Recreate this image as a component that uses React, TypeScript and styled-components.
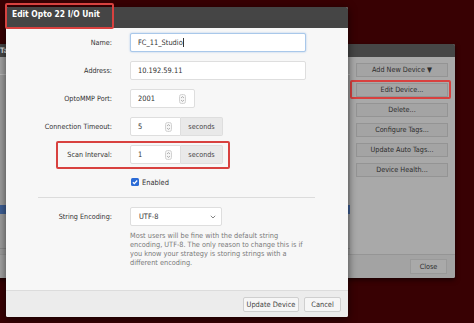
import React from "react";
import styled, { createGlobalStyle, css } from "styled-components";

const font = `"DejaVu Sans Condensed", "DejaVu Sans", sans-serif`;

const GlobalStyle = createGlobalStyle`
  html, body {
    margin: 0;
    padding: 0;
  }
  body {
    background: #380103;
    font-family: ${font};
  }
`;

const highlight = css`
  &::after {
    content: "";
    position: absolute;
    border: 2px solid #d8413f;
    border-radius: 2px;
    pointer-events: none;
  }
`;

export default function App() {
  return (
    <Stage>
      <GlobalStyle />
      <DeviceWindow>
        <WindowTitle>Tags</WindowTitle>
        <WindowBody>
          <TableArea>
            <TableHead />
            <TableRow $height={130} />
            <TableRow $height={9} $selected />
            <TableRow $height={34} $ruled />
            <TableFill />
          </TableArea>
          <SideColumn>
            <SideButton>Add New Device ▼</SideButton>
            <SideButton $highlight>Edit Device...</SideButton>
            <SideButton>Delete...</SideButton>
            <SideButton>Configure Tags...</SideButton>
            <SideButton>Update Auto Tags...</SideButton>
            <SideButton>Device Health...</SideButton>
          </SideColumn>
        </WindowBody>
        <WindowFooter>
          <CloseButton>Close</CloseButton>
        </WindowFooter>
      </DeviceWindow>

      <Dialog>
        <DialogTitle>Edit Opto 22 I/O Unit</DialogTitle>
        <DialogBody>
          <FormRow>
            <Label>Name:</Label>
            <TextInput $width={176} $focused>
              FC_11_Studio<Caret />
            </TextInput>
          </FormRow>
          <FormRow>
            <Label>Address:</Label>
            <TextInput $width={176}>10.192.59.11</TextInput>
          </FormRow>
          <FormRow>
            <Label>OptoMMP Port:</Label>
            <NumberField width={65} value="2001" />
          </FormRow>
          <FormRow>
            <Label>Connection Timeout:</Label>
            <InputGroup>
              <NumberField width={51} value="5" grouped />
              <Addon>seconds</Addon>
            </InputGroup>
          </FormRow>
          <FormRow $highlight>
            <Label>Scan Interval:</Label>
            <InputGroup>
              <NumberField width={51} value="1" grouped />
              <Addon>seconds</Addon>
            </InputGroup>
          </FormRow>
          <CheckRow>
            <Check>
              <svg width="8" height="8" viewBox="0 0 8 8">
                <rect x="0" y="0" width="8" height="8" rx="1.5" fill="#2b6bd6" />
                <path d="M1.9 4.2 L3.3 5.6 L6.2 2.5" fill="none" stroke="#fff" strokeWidth="1.3" />
              </svg>
              Enabled
            </Check>
          </CheckRow>
          <Divider />
          <FormRow>
            <Label>String Encoding:</Label>
            <Select>
              UTF-8
              <svg width="6" height="4" viewBox="0 0 6 4">
                <path d="M0.8 0.8 L3 3 L5.2 0.8" fill="none" stroke="#777" strokeWidth="0.9" />
              </svg>
            </Select>
          </FormRow>
          <HelpText>
            Most users will be fine with the default string
            <br />
            encoding, UTF-8. The only reason to change this is if
            <br />
            you know your strategy is storing strings with a
            <br />
            different encoding.
          </HelpText>
        </DialogBody>
        <DialogFooter>
          <FooterButton $width={56}>Update Device</FooterButton>
          <FooterButton $width={37}>Cancel</FooterButton>
        </DialogFooter>
      </Dialog>
    </Stage>
  );
}

interface NumberFieldProps {
  width: number;
  value: string;
  grouped?: boolean;
}

const NumberField: React.FC<NumberFieldProps> = ({ width, value, grouped }) => (
  <NumberBox $width={width} $grouped={grouped}>
    {value}
    <svg width="7" height="10" viewBox="0 0 7 10">
      <rect x="0.5" y="0.5" width="6" height="9" rx="2" fill="#f6f6f6" stroke="#d2d2d2" />
      <path d="M2 4 L3.5 2.6 L5 4 M2 6 L3.5 7.4 L5 6" fill="none" stroke="#a0a0a0" strokeWidth="0.8" />
    </svg>
  </NumberBox>
);

const Stage = styled.div`
  position: relative;
  width: 474px;
  height: 323px;
  overflow: hidden;
  background: #380103;
`;

/* background window, dimmed by the modal */
const DeviceWindow = styled.div`
  position: absolute;
  left: -8px;
  top: 44px;
  width: 463px;
  height: 234px;
  display: flex;
  flex-direction: column;
  overflow: hidden;
  background: #a9a9a9;
  border-radius: 0 2px 2px 0;
  box-shadow: 0 2px 5px rgba(0, 0, 0, 0.55);
`;

const WindowTitle = styled.div`
  flex: none;
  height: 13px;
  padding-left: 8px;
  background: #464646;
  color: #d8d8d8;
  font-size: 7.5px;
  font-weight: bold;
  line-height: 13px;
`;

const WindowBody = styled.div`
  flex: 1;
  min-height: 0;
  display: flex;
`;

const TableArea = styled.div`
  flex: 1;
  display: flex;
  flex-direction: column;
  background: #9d9d9d;
`;

const TableHead = styled.div`
  flex: none;
  height: 17px;
  border-bottom: 1px solid #b8b8b8;
  background: #a3a3a3;
`;

const TableRow = styled.div<{ $height: number; $selected?: boolean; $ruled?: boolean }>`
  flex: none;
  height: ${(p) => p.$height}px;
  background: ${(p) => (p.$selected ? "#3e5f95" : "transparent")};
  border-bottom: ${(p) => (p.$ruled ? "1px solid #8a8a8a" : "none")};
`;

const TableFill = styled.div`
  flex: 1;
`;

const SideColumn = styled.div`
  width: 92px;
  padding: 6px 7px 0 6px;
  display: flex;
  flex-direction: column;
  gap: 6px;
`;

const SideButton = styled.div<{ $highlight?: boolean }>`
  position: relative;
  height: 14px;
  box-sizing: border-box;
  border: 1px solid #949494;
  background: #a4a4a4;
  color: #2c2c2c;
  font-size: 7.2px;
  line-height: 12px;
  text-align: center;
  ${(p) =>
    p.$highlight &&
    css`
      ${highlight}
      &::after {
        left: -7px;
        right: -4px;
        top: -4px;
        bottom: -3px;
      }
    `}
`;

const WindowFooter = styled.div`
  flex: none;
  height: 24px;
  box-sizing: border-box;
  border-top: 1px solid #959595;
  background: #a3a3a3;
  display: flex;
  justify-content: flex-end;
  align-items: center;
  padding-right: 8px;
`;

const CloseButton = styled.div`
  width: 35px;
  height: 13px;
  background: #a9a9a9;
  border: 1px solid #999;
  color: #2c2c2c;
  font-size: 7.2px;
  line-height: 13px;
  text-align: center;
`;

/* modal dialog */
const Dialog = styled.div`
  position: absolute;
  left: 6px;
  top: 7px;
  width: 342px;
  height: 310px;
  display: flex;
  flex-direction: column;
  background: #f7f7f7;
  border-radius: 2px;
  box-shadow: 0 2px 8px rgba(0, 0, 0, 0.6);
`;

const DialogTitle = styled.div`
  position: relative;
  height: 21px;
  box-sizing: border-box;
  padding: 1px 0 0 6px;
  background: #454545;
  color: #fff;
  font-size: 8.4px;
  font-weight: bold;
  line-height: 13px;
  border-radius: 2px 2px 0 0;
  ${highlight}
  &::after {
    left: -1px;
    top: -4px;
    width: 105px;
    height: 22px;
  }
`;

const DialogBody = styled.div`
  flex: 1;
  padding-top: 5px;
`;

const FormRow = styled.div<{ $highlight?: boolean }>`
  position: relative;
  display: grid;
  grid-template-columns: 106px auto;
  column-gap: 18px;
  align-items: center;
  justify-items: start;
  height: 19px;
  margin-bottom: 9px;
  ${(p) =>
    p.$highlight &&
    css`
      ${highlight}
      &::after {
        left: 50px;
        width: 170px;
        top: -4px;
        height: 24px;
      }
    `}
`;

const Label = styled.div`
  justify-self: end;
  color: #333;
  font-size: 7.2px;
`;

const fieldBase = css`
  box-sizing: border-box;
  height: 19px;
  display: flex;
  align-items: center;
  background: #fff;
  border: 1px solid #dedede;
  color: #333;
  font-size: 7.4px;
`;

const TextInput = styled.div<{ $width: number; $focused?: boolean }>`
  ${fieldBase}
  width: ${(p) => p.$width}px;
  padding-left: 7px;
  border-radius: 2px;
  ${(p) =>
    p.$focused &&
    css`
      border-color: #a9c8ea;
      box-shadow: 0 0 2px rgba(110, 160, 220, 0.6);
    `}
`;

const Caret = styled.span`
  display: inline-block;
  width: 1px;
  height: 9px;
  margin-left: 0.5px;
  background: #333;
`;

const InputGroup = styled.div`
  display: flex;
`;

const NumberBox = styled.div<{ $width: number; $grouped?: boolean }>`
  ${fieldBase}
  width: ${(p) => p.$width}px;
  padding: 0 8px 0 7px;
  justify-content: space-between;
  border-radius: ${(p) => (p.$grouped ? "2px 0 0 2px" : "2px")};
`;

const Addon = styled.div`
  box-sizing: border-box;
  width: 42px;
  height: 19px;
  border: 1px solid #dedede;
  border-left: none;
  border-radius: 0 2px 2px 0;
  background: #e9e9e9;
  color: #444;
  font-size: 7.2px;
  line-height: 17px;
  text-align: center;
`;

const CheckRow = styled.div`
  height: 18px;
  display: flex;
  align-items: center;
  padding-left: 125px;
`;

const Check = styled.div`
  display: flex;
  align-items: center;
  gap: 3px;
  color: #333;
  font-size: 7.4px;
`;

const Divider = styled.div`
  height: 1px;
  margin: 6px 33px 9px 32px;
  background: #dcdcdc;
`;

const Select = styled.div`
  ${fieldBase}
  width: 92px;
  padding: 0 5px 0 8px;
  justify-content: space-between;
  border-radius: 2px;
`;

const HelpText = styled.div`
  margin: -4px 0 0 124px;
  color: #7a7a7a;
  font-size: 7.3px;
  line-height: 9px;
  white-space: nowrap;
`;

const DialogFooter = styled.div`
  height: 27px;
  box-sizing: border-box;
  border-top: 1px solid #dcdcdc;
  background: #ececec;
  border-radius: 0 0 2px 2px;
  display: flex;
  justify-content: flex-end;
  align-items: center;
  gap: 5px;
  padding-right: 7px;
`;

const FooterButton = styled.div<{ $width: number }>`
  box-sizing: border-box;
  width: ${(p) => p.$width}px;
  height: 15px;
  border: 1px solid #cfcfcf;
  border-radius: 2px;
  background: #f6f6f6;
  color: #444;
  font-size: 7.4px;
  line-height: 13px;
  text-align: center;
`;
